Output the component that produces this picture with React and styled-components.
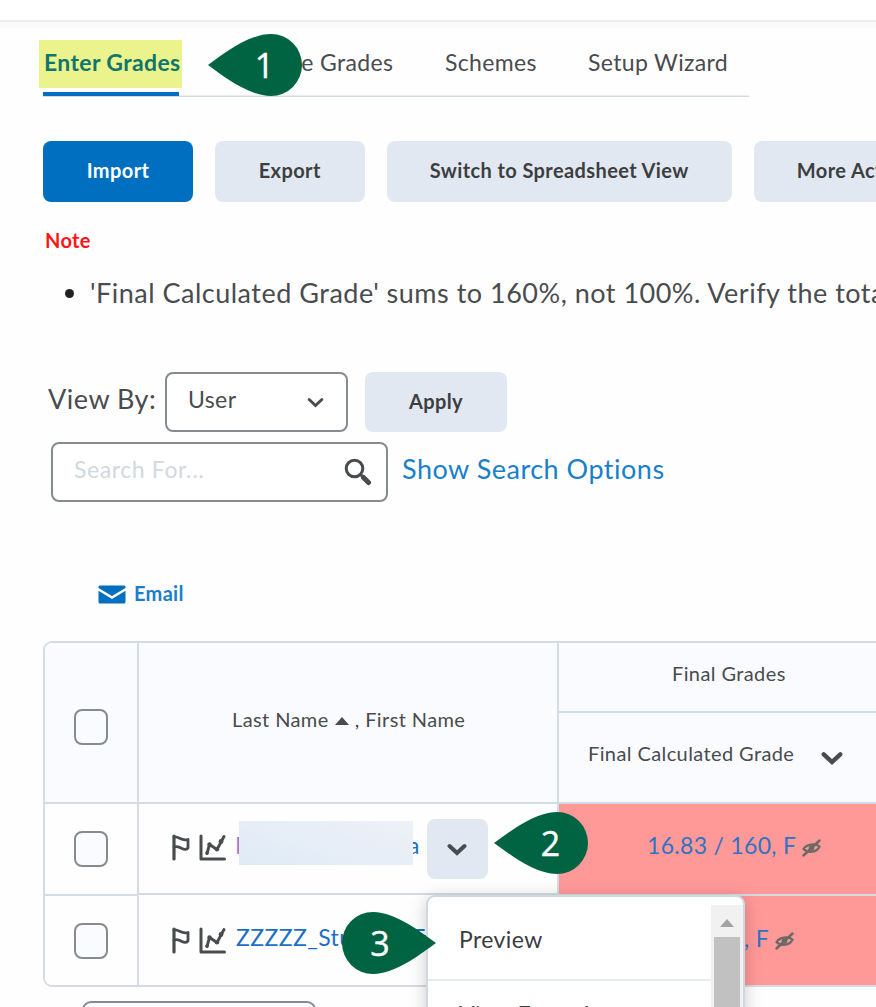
import styled, { createGlobalStyle } from 'styled-components';

const GlobalStyle = createGlobalStyle`
  * { box-sizing: border-box; }
  body {
    margin: 0;
    background: #fff;
    color: #494c4e;
    font-family: Lato, 'Liberation Sans', sans-serif;
    overflow: hidden;
  }
`;

const Page = styled.div`
  position: relative;
  width: 876px;
  height: 1007px;
  overflow: hidden;
  background: #fefefe;
`;

const TopStrip = styled.div`
  height: 28px;
  border-top: 20px solid #fff;
  background: linear-gradient(#ececec 2px, #fafafa 2px);
`;

const Tabs = styled.nav`
  display: flex;
  width: 706px;
  height: 57px;
  margin: 12px 0 0 43px;
  box-shadow: inset 0 -1.5px #d3d9e3;
  white-space: nowrap;
`;

const Tab = styled.a`
  position: relative;
  height: 48px;
  line-height: 45px;
  font-size: 23px;
  letter-spacing: 0.35px;
  color: #494c4e;
  width: ${({ $width }) => $width}px;
`;

const ActiveTab = styled(Tab)`
  width: 143px;
  height: 48px;
  margin: 0 49px 0 -4px;
  padding-left: 5px;
  background: #ebf38c;
  color: #10756c;
  font-weight: 700;

  &::after {
    content: '';
    position: absolute;
    left: 4px;
    bottom: -8px;
    width: 136px;
    height: 4px;
    background: #006fbf;
  }
`;

const Toolbar = styled.div`
  display: flex;
  gap: 22px;
  margin: 44px 0 0 43px;
`;

const Button = styled.button`
  flex: none;
  width: ${({ $width }) => $width}px;
  height: ${({ $height }) => $height || 61}px;
  padding: 0 0 3px;
  border: 0;
  border-radius: 8px;
  background: ${({ $primary }) => ($primary ? '#006fbf' : '#e2e8f1')};
  color: ${({ $primary }) => ($primary ? '#fff' : '#3c3e40')};
  font: 700 20px Lato, sans-serif;
  letter-spacing: 0.4px;
  white-space: nowrap;
`;

const Note = styled.h2`
  margin: 25px 0 0 45px;
  font-size: 20px;
  line-height: 26px;
  letter-spacing: 0.3px;
  color: #ff1414;
`;

const Notes = styled.ul`
  margin: 22px 0 0;
  padding-left: 90px;
  font-size: 27px;
  line-height: 36px;
  letter-spacing: 0.5px;
  white-space: nowrap;

  li::marker { color: #202122; }
`;

const ViewBy = styled.div`
  display: flex;
  margin: 61px 0 0 48px;
  height: 60px;
`;

const Label = styled.label`
  width: 117px;
  font-size: 27px;
  line-height: 54px;
  letter-spacing: 0.5px;
`;

const Select = styled.div`
  display: flex;
  justify-content: space-between;
  width: 183px;
  height: 60px;
  margin-right: 17px;
  padding: 0 22px 0 21px;
  border: 2px solid #868b90;
  border-radius: 8px;
  background: #fff;
  font-size: 23px;
  line-height: 51px;
  letter-spacing: 0.4px;

  svg { margin-top: 23px; }
`;

const SearchRow = styled.div`
  display: flex;
  margin: 10px 0 0 51px;
`;

const SearchBox = styled.div`
  display: flex;
  justify-content: space-between;
  width: 337px;
  height: 60px;
  padding: 0 14px 0 21px;
  border: 2px solid #868b90;
  border-radius: 8px;
  background: #fff;
  color: #d0d8e0;
  font-size: 23px;
  line-height: 50px;
  letter-spacing: 0.6px;

  svg { margin-top: 14px; }
`;

const SearchLink = styled.a`
  margin-left: 14px;
  color: #1a7fcb;
  font-size: 27px;
  line-height: 54px;
  letter-spacing: 0.5px;
`;

const EmailAction = styled.a`
  display: flex;
  align-items: center;
  gap: 8px;
  height: 26px;
  margin: 78px 0 0 98px;
  color: #1a7fcb;
  font-size: 20px;
  font-weight: 700;
  letter-spacing: 0.3px;

  svg { margin-top: 3px; }
`;

const Table = styled.div`
  display: flex;
  width: 900px;
  height: 346px;
  margin: 35px 0 0 43px;
  border: 2px solid #d3dce4;
  border-radius: 9px;
  overflow: hidden;
  font-size: 20px;
  letter-spacing: 0.4px;
  white-space: nowrap;
`;

const Column = styled.div`
  flex: none;
  width: ${({ $width }) => $width}px;
  border-right: 2px solid #d3dce4;
`;

const Cell = styled.div`
  display: flex;
  align-items: center;
  height: ${({ $height }) => $height}px;
  padding-left: ${({ $inset }) => $inset || 0}px;
  background: ${({ $bg }) => $bg || '#fefefe'};
  border-bottom: 2px solid #d3dce4;

  &:last-child { border-bottom: 0; }
`;

const HeadCell = styled(Cell)`
  background: #f9fbff;
  padding-bottom: ${({ $lift }) => $lift || 0}px;
`;

const Checkbox = styled.span`
  width: 34px;
  height: 36px;
  margin-top: ${({ $drop }) => $drop || 0}px;
  border: 2px solid #868b90;
  border-radius: 8px;
  background: #f9fbff;
`;

const SortArrow = styled.span`
  width: 0;
  margin: 4px 6px 0 6px;
  border: 7px solid transparent;
  border-top: 0;
  border-bottom: 8px solid #494c4e;
`;

const ChevronSlot = styled.span`
  display: flex;
  margin: 10px 0 0 27px;
`;

const RowIcons = styled.span`
  display: flex;
  flex: none;
  gap: 9px;
  width: 64px;
  padding-bottom: ${({ $lift }) => $lift || 0}px;
`;

const UserLink = styled.a`
  display: flex;
  align-items: center;
  padding-bottom: ${({ $lift }) => $lift || 0}px;
  color: #1c6fc4;
  font-size: 23px;
  letter-spacing: 0.4px;
`;

const Initial = styled.span`
  width: 3px;
  overflow: hidden;
  text-indent: -1px;
  color: #a27bc6;
`;

const Redacted = styled.span`
  width: 174px;
  height: 44px;
  margin: -4px -5px 0 0;
  background: linear-gradient(20deg, #dfebf6, #e8eef7 60%, #eef2f7);
  z-index: 1;
`;

const RowMenuButton = styled.button`
  display: flex;
  align-items: center;
  justify-content: center;
  width: 61px;
  height: 60px;
  margin-left: 7px;
  padding: 2px 0 0;
  border: 0;
  border-radius: 8px;
  background: #e2e8f1;
`;

const Grade = styled.span`
  display: flex;
  align-items: center;
  gap: 6px;
  padding-bottom: ${({ $lift }) => $lift}px;
  color: #2f72c4;
  font-size: 23px;
  letter-spacing: 0.3px;

  svg { margin-top: 6px; }
`;

const PageSelect = styled.div`
  width: 234px;
  height: 60px;
  margin: 14px 0 0 82px;
  border: 2px solid #868b90;
  border-radius: 9px;
  background: #f9fbff;
`;

const Menu = styled.div`
  position: absolute;
  left: 426px;
  top: 895px;
  display: flex;
  width: 319px;
  height: 160px;
  border: 2px solid #d0d9e1;
  border-radius: 9px;
  background: #fff;
  box-shadow: 0 3px 18px rgba(0, 0, 0, 0.2);
`;

const MenuItems = styled.div`
  flex: 1;
`;

const MenuItem = styled.div`
  height: 84px;
  padding: 0 0 0 31px;
  border-bottom: 2px solid #e6ecf3;
  color: #3a3c3e;
  font-size: 23px;
  line-height: ${({ $line }) => $line}px;
  letter-spacing: 0.4px;
`;

const ScrollTrack = styled.div`
  display: flex;
  flex-direction: column;
  align-items: center;
  width: 32px;
  margin-top: 8px;
  background: #f1f1f1;
`;

const ScrollArrow = styled.span`
  margin: 14px 0 10px;
  border: 7px solid transparent;
  border-top: 0;
  border-bottom: 8px solid #a3a3a3;
`;

const ScrollThumb = styled.span`
  flex: 1;
  width: 26px;
  background: #c1c1c1;
`;

const CalloutBox = styled.div`
  position: absolute;
  left: ${({ $x }) => $x}px;
  top: ${({ $y }) => $y}px;
  width: 94px;
  height: 62px;

  svg {
    display: block;
    transform: ${({ $flip }) => ($flip ? 'scaleX(-1)' : 'none')};
  }

  span {
    position: absolute;
    top: 0;
    left: ${({ $flip }) => ($flip ? 18 : 37)}px;
    width: 40px;
    text-align: center;
    color: #fff;
    font: 34px/62px 'Open Sans', sans-serif;
    -webkit-text-stroke: 0.4px #fff;
  }
`;

function Callout({ x, y, flip, children }) {
  return (
    <CalloutBox $x={x} $y={y} $flip={flip}>
      <svg width="94" height="62" viewBox="0 0 94 62">
        <path d="M0 31C14 21 40 0 63 0a31 31 0 0 1 0 62C40 62 14 41 0 31z" fill="#006341" />
      </svg>
      <span>{children}</span>
    </CalloutBox>
  );
}

function Chevron({ width = 20, stroke = 4 }) {
  return (
    <svg width={width} height={width * 0.65} viewBox="0 0 20 13" fill="none">
      <path d="M2.5 3L10 10l7.5-7" stroke="#494c4e" strokeWidth={stroke} strokeLinecap="round" strokeLinejoin="miter" />
    </svg>
  );
}

function SearchIcon() {
  return (
    <svg width="28" height="28" viewBox="0 0 28 28" fill="none" stroke="#494c4e">
      <circle cx="10.5" cy="10.5" r="8.3" strokeWidth="3" />
      <path d="M16.5 16.5l3 3" strokeWidth="3" />
      <path d="M19.5 19.5l5 5" strokeWidth="5" strokeLinecap="round" />
    </svg>
  );
}

function MailIcon() {
  return (
    <svg width="28" height="19" viewBox="0 0 28 19" fill="#006fbf">
      <path d="M.5 2Q.5.5 2 .5h24q1.5 0 1.5 1.5v1L14 11 .5 3z" />
      <path d="M.5 5.8L14 14 27.5 5.8V17q0 1.5-1.5 1.5H2Q.5 18.5.5 17z" />
    </svg>
  );
}

function FlagIcon() {
  return (
    <svg width="18" height="27" viewBox="0 0 18 27" fill="none" stroke="#494c4e" strokeLinecap="round" strokeLinejoin="round">
      <path d="M2 2v23" strokeWidth="3.2" />
      <path d="M2 3c5-1 7 4.500 14 2.500v8.300c-1.500 2-4 1.800-6 .7-3-1.800-5-2.500-8-1.500" strokeWidth="2.8" />
    </svg>
  );
}

function ChartIcon() {
  return (
    <svg width="27" height="27" viewBox="0 0 27 27" fill="none" stroke="#494c4e" strokeLinecap="round" strokeLinejoin="round">
      <path d="M2 2v23h23.5" strokeWidth="3" />
      <path d="M8 19.5l2.5-9 7.5 5L25 2.500" strokeWidth="2.9" />
      <g fill="#494c4e" stroke="none">
        <circle cx="8" cy="19" r="1.8" />
        <circle cx="10.5" cy="10.5" r="2.2" />
        <circle cx="18" cy="15.2" r="2.2" />
        <circle cx="22" cy="7.5" r="2.4" />
      </g>
    </svg>
  );
}

function HiddenIcon() {
  return (
    <svg width="19" height="18" viewBox="0 0 19 18" fill="none" stroke="#6b6964">
      <path d="M1.5 10C4 5.500 13 3.500 17.5 7.500 15 13.500 6 14.500 1.5 10z" strokeWidth="2.2" />
      <circle cx="9.5" cy="9" r="2.8" fill="#6b6964" stroke="none" />
      <path d="M1.5 16.500L17.5 1.500" strokeWidth="2.4" strokeLinecap="round" />
    </svg>
  );
}

export default function App() {
  return (
    <Page>
      <GlobalStyle />
      <TopStrip />
      <Tabs>
        <ActiveTab>Enter Grades</ActiveTab>
        <Tab $width={214}>Manage Grades</Tab>
        <Tab $width={143}>Schemes</Tab>
        <Tab>Setup Wizard</Tab>
      </Tabs>

      <Toolbar>
        <Button $primary $width={150}>Import</Button>
        <Button $width={149.5}>Export</Button>
        <Button $width={345.5}>Switch to Spreadsheet View</Button>
        <Button $width={210}>More Actions</Button>
      </Toolbar>

      <Note>Note</Note>
      <Notes>
        <li>'Final Calculated Grade' sums to 160%, not 100%. Verify the totals</li>
      </Notes>

      <ViewBy>
        <Label>View By:</Label>
        <Select>
          User
          <Chevron width={17} stroke={3.4} />
        </Select>
        <Button $width={142} $height={60}>Apply</Button>
      </ViewBy>
      <SearchRow>
        <SearchBox>
          Search For...
          <SearchIcon />
        </SearchBox>
        <SearchLink>Show Search Options</SearchLink>
      </SearchRow>

      <EmailAction>
        <MailIcon />
        Email
      </EmailAction>

      <Table>
        <Column $width={94}>
          <HeadCell $height={161} $inset={29}><Checkbox $drop={9} /></HeadCell>
          <Cell $height={92} $inset={29}><Checkbox /></Cell>
          <Cell $height={89} $inset={29}><Checkbox /></Cell>
        </Column>
        <Column $width={420}>
          <HeadCell $height={161} $inset={93} $lift={7}>
            <span>Last Name</span>
            <SortArrow />
            <span>, First Name</span>
          </HeadCell>
          <Cell $height={91} $inset={33}>
            <RowIcons $lift={3}><FlagIcon /><ChartIcon /></RowIcons>
            <UserLink $lift={8}>
              <Initial>I</Initial>
              <Redacted />
              a
            </UserLink>
            <RowMenuButton><Chevron /></RowMenuButton>
          </Cell>
          <Cell $height={90} $inset={33}>
            <RowIcons><FlagIcon /><ChartIcon /></RowIcons>
            <UserLink $lift={6}>ZZZZZ_Student, Test</UserLink>
          </Cell>
        </Column>
        <Column $width={386}>
          <HeadCell $height={70} $inset={113} $lift={9}>Final Grades</HeadCell>
          <HeadCell $height={91} $inset={29} $lift={9}>
            Final Calculated Grade
            <ChevronSlot><Chevron width={22} /></ChevronSlot>
          </HeadCell>
          <Cell $height={92} $inset={88} $bg="#ff9998">
            <Grade $lift={8}>16.83 / 160, F <HiddenIcon /></Grade>
          </Cell>
          <Cell $height={89} $inset={88} $bg="#ff9998">
            <Grade $lift={5}>0.00 / 10, F <HiddenIcon /></Grade>
          </Cell>
        </Column>
      </Table>
      <PageSelect />

      <Menu>
        <MenuItems>
          <MenuItem $line={85}>Preview</MenuItem>
          <MenuItem $line={67}>View Event Log</MenuItem>
        </MenuItems>
        <ScrollTrack>
          <ScrollArrow />
          <ScrollThumb />
        </ScrollTrack>
      </Menu>

      <Callout x={207.5} y={34}>1</Callout>
      <Callout x={493.5} y={812}>2</Callout>
      <Callout x={342} y={912} flip>3</Callout>
    </Page>
  );
}
